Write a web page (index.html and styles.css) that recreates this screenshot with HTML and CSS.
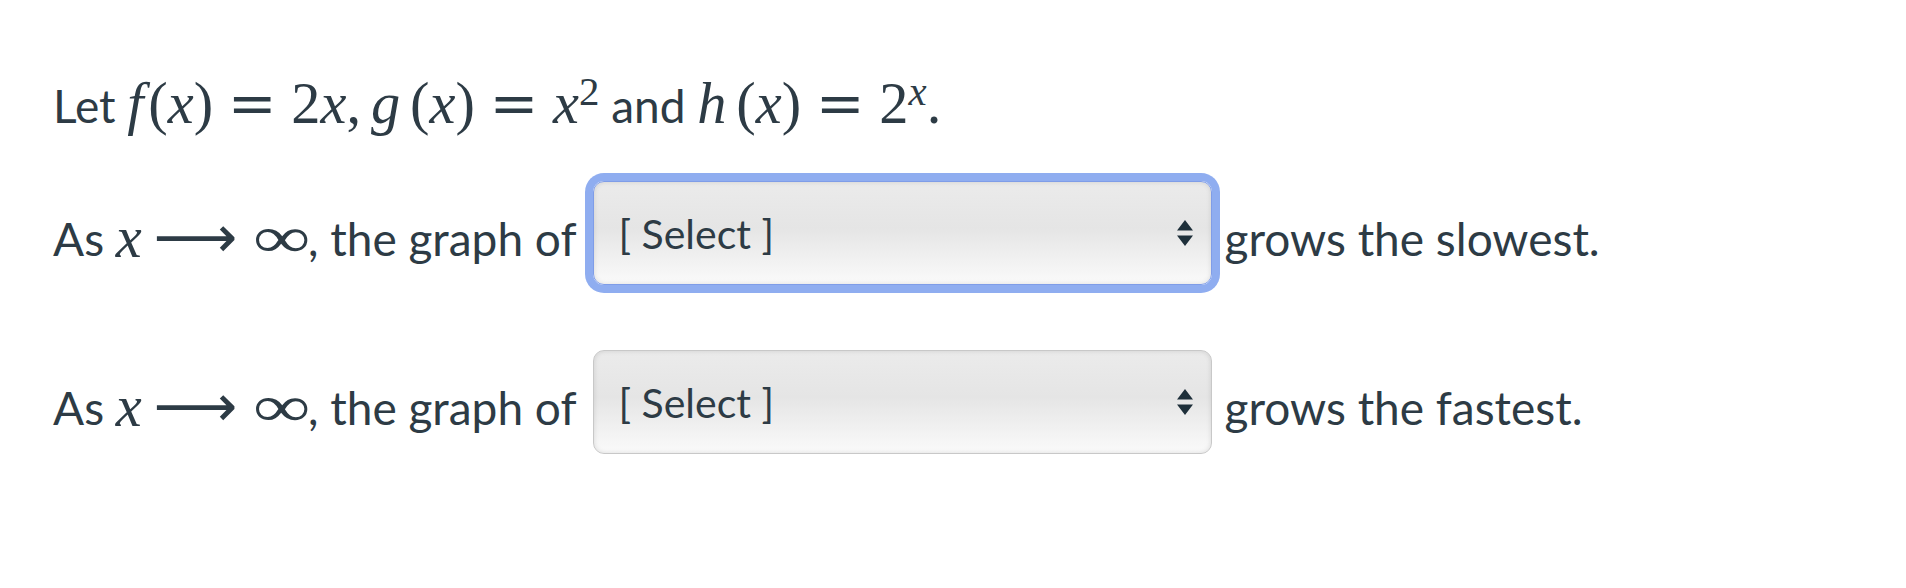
FILE: index.html
```html
<!DOCTYPE html>
<html lang="en">
<head>
<meta charset="utf-8">
<title>Growth rates</title>
<link rel="stylesheet" href="styles.css">
</head>
<body>
<main class="question">
  <p class="line">Let <span class="math"><i>f</i><span class="ic"></span>(<i>x</i>)<span class="rel">=</span>2<i>x</i>,<span class="thin"></span><i>g</i><span class="thin"></span>(<i>x</i>)<span class="rel">=</span><i>x</i><sup>2</sup></span> and <span class="math"><i>h</i><span class="thin"></span>(<i>x</i>)<span class="rel">=</span>2<sup><i>x</i></sup>.</span></p>
  <p class="line choice">As <span class="math"><i>x</i><span class="rel arrow">⟶</span><span class="inf">∞</span></span>, the graph of<span class="select focused"><span class="select-label">[ Select ]</span><svg class="arrows" width="18" height="30" viewBox="0 0 18 30" aria-hidden="true"><path d="M9 2 L17 12.5 L1 12.5 Z M1 17.5 L17 17.5 L9 28 Z"/></svg></span>grows the slowest.</p>
  <p class="line choice">As <span class="math"><i>x</i><span class="rel arrow">⟶</span><span class="inf">∞</span></span>, the graph of<span class="select"><span class="select-label">[ Select ]</span><svg class="arrows" width="18" height="30" viewBox="0 0 18 30" aria-hidden="true"><path d="M9 2 L17 12.5 L1 12.5 Z M1 17.5 L17 17.5 L9 28 Z"/></svg></span>grows the fastest.</p>
</main>
</body>
</html>
```

FILE: styles.css
```css
* { box-sizing: border-box; }
html, body { margin: 0; background: #ffffff; }
body {
  font-family: Lato, "Noto Sans", sans-serif;
  font-size: 46px;
  color: #2d3b45;
}
.question { padding: 74px 0 0 53px; }
.line { margin: 0; line-height: 55px; white-space: nowrap; }
.line + .line { margin-top: 48px; }
.line.choice + .line.choice { margin-top: 65px; }
.math {
  font-family: "Liberation Serif", "DejaVu Serif", serif;
  font-size: 1.27em;
  line-height: 1;
}
.math i { font-style: italic; }
.ic { display: inline-block; width: 0.08em; }
.rel {
  font-family: "DejaVu Serif", serif;
  font-weight: normal;
  margin: 0 0.25em;
  font-style: normal;
}
.arrow { font-family: "DejaVu Sans", "DejaVu Serif", serif; margin: 0 0.12em 0 0.2em; }
.inf {
  display: inline-block;
  font-family: "Liberation Serif", serif;
  transform: scaleX(1.38);
  margin: 0 0.1em 0 0.28em;
}
.thin { display: inline-block; width: 0.17em; }
sup { font-size: 0.7em; vertical-align: 0.45em; line-height: 0; }
.select {
  display: inline-flex;
  align-items: center;
  justify-content: space-between;
  width: 619px;
  height: 104px;
  padding: 0 17px 0 25px;
  margin: 0 13px 0 16px;
  vertical-align: 8px;
  border: 1px solid #c8c8c8;
  border-radius: 11px;
  background: linear-gradient(#ebebeb, #e5e5e5 45%, #fafafa);
  box-shadow: inset 0 0 5px rgba(0, 0, 0, 0.12);
  font-size: 41px;
  line-height: 1.2;
  color: #2d3b45;
}
.select.focused {
  border-color: #7f9de8;
  box-shadow: inset 0 0 5px rgba(0, 0, 0, 0.12), 0 0 0 8px #8fadf0;
}
.arrows { fill: #1e2f3a; flex: none; }
```
